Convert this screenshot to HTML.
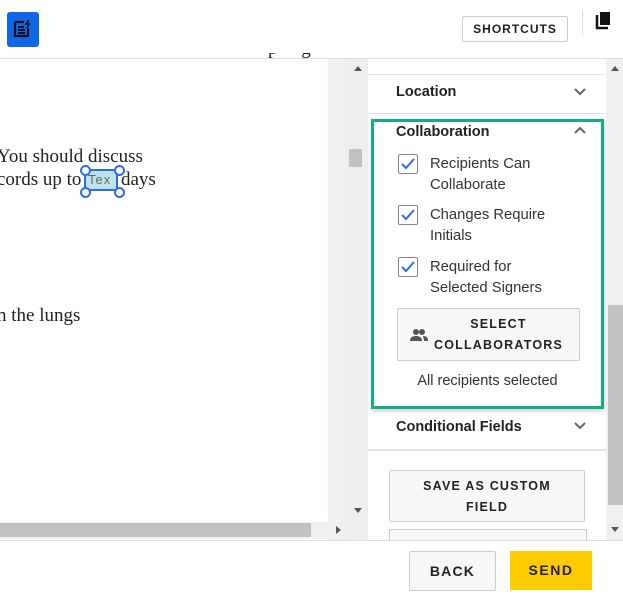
<!DOCTYPE html>
<html><head><style>
body{margin:0;width:623px;height:591px;position:relative;overflow:hidden;background:#fff;font-family:"Liberation Sans",Arial,sans-serif;color:#222}
.a{position:absolute}
.serif{font-family:"Liberation Serif",serif;font-size:19px;color:#222;position:absolute;white-space:nowrap}
.btn{position:absolute;border:1px solid #ccc;border-radius:2px;background:#f7f7f7;font-weight:bold;letter-spacing:1.2px;font-size:12.5px;text-align:center;color:#222}
.cb{position:absolute;left:398px;width:18px;height:18px;border:1px solid #888;border-radius:2px;background:#fff}
.cb svg{position:absolute;left:2px;top:3px}
.lbl{position:absolute;left:430px;font-size:14.8px;line-height:21px;color:#333}
.h{position:absolute;left:396px;font-weight:bold;font-size:14.5px;color:#222}
</style></head><body>
<div class="serif" style="left:268px;top:38px">p &nbsp; &nbsp; g</div>
<!-- header -->
<div class="a" style="left:0;top:0;width:623px;height:53px;background:#fff"></div>
<div class="a" style="left:7px;top:12px;width:32px;height:35px;background:#0e66e9;border-radius:3px"></div>
<svg class="a" style="left:13px;top:19px" width="20" height="20" viewBox="0 0 20 20"><path d="M2 3h9M2 3v14h13V9" stroke="#111" stroke-width="2.2" fill="none"/><path d="M5 8h6M5 11h7M5 14h7" stroke="#111" stroke-width="2"/><path d="M16 1l-3 4h3l-2 4" stroke="#111" stroke-width="1.6" fill="none"/></svg>
<div class="btn" style="left:462px;top:16px;width:104px;height:24px;line-height:24px;font-size:12px;letter-spacing:1px;background:#fff">SHORTCUTS</div>
<div class="a" style="left:582px;top:10px;width:1px;height:25px;background:#ddd"></div>
<svg class="a" style="left:594px;top:10px" width="20" height="20" viewBox="0 0 20 20"><path d="M6 2h10v13H6z" fill="#111"/><path d="M3 5v13h11" stroke="#111" stroke-width="2.5" fill="none"/></svg>
<div class="a" style="left:0;top:58px;width:623px;height:1px;background:#ddd"></div>
<!-- doc -->
<div class="serif" style="left:-3px;top:146px">You should discuss</div>
<div class="serif" style="left:-3px;top:169px">cords up to</div>
<div class="serif" style="left:121px;top:169px">days</div>
<div class="serif" style="left:-3px;top:305px">n the lungs</div>
<div class="a" style="left:84px;top:169px;width:34px;height:22px;background:#bfe3ee;border:2px solid #2e6fe0;box-sizing:border-box"></div>
<div class="a" style="left:88px;top:172px;font-size:13px;color:#666;letter-spacing:1px">Tex</div>
<div class="a" style="left:80px;top:165px;width:7px;height:7px;border:2px solid #2e6fe0;border-radius:50%;background:#fff"></div>
<div class="a" style="left:114px;top:165px;width:7px;height:7px;border:2px solid #2e6fe0;border-radius:50%;background:#fff"></div>
<div class="a" style="left:80px;top:187px;width:7px;height:7px;border:2px solid #2e6fe0;border-radius:50%;background:#fff"></div>
<div class="a" style="left:114px;top:187px;width:7px;height:7px;border:2px solid #2e6fe0;border-radius:50%;background:#fff"></div>
<!-- left scrollbars -->
<div class="a" style="left:328px;top:59px;width:40px;height:481px;background:#f2f0f0"></div>
<div class="a" style="left:345px;top:59px;width:23px;height:481px;background:#efeded"></div>
<div class="a" style="left:354px;top:66px;border:4px solid transparent;border-bottom:5px solid #555;border-top:0"></div>
<div class="a" style="left:354px;top:508px;border:4px solid transparent;border-top:5px solid #555;border-bottom:0"></div>
<div class="a" style="left:349px;top:149px;width:13px;height:18px;background:#c1c1c1"></div>
<div class="a" style="left:0;top:522px;width:345px;height:17px;background:#f0f0f0"></div>
<div class="a" style="left:0;top:523px;width:311px;height:14px;background:#c1c1c1"></div>
<div class="a" style="left:336px;top:526px;border:4px solid transparent;border-left:5px solid #555;border-right:0"></div>
<!-- right panel -->
<div class="a" style="left:368px;top:59px;width:238px;height:481px;background:#fff"></div>
<div class="a" style="left:368px;top:74px;width:238px;height:1px;background:#e2e2e2"></div>
<div class="h" style="top:84px">Location</div>
<svg class="a" style="left:573px;top:87px" width="14" height="10"><path d="M2 2l5 5 5-5" stroke="#666" stroke-width="2" fill="none"/></svg>
<div class="a" style="left:368px;top:113px;width:238px;height:1px;background:#e2e2e2"></div>
<div class="a" style="left:371px;top:119px;width:233px;height:290px;border:3px solid #12ac8c;box-sizing:border-box;box-shadow:0 2px 4px rgba(0,0,0,.2);background:#fff"></div>
<div class="h" style="top:124px">Collaboration</div>
<svg class="a" style="left:573px;top:125px" width="14" height="10"><path d="M2 8l5-5 5 5" stroke="#666" stroke-width="2" fill="none"/></svg>
<div class="cb" style="top:154px"><svg width="14" height="12"><path d="M1 6l4 4 8-9" stroke="#2e6fe0" stroke-width="2" fill="none"/></svg></div>
<div class="lbl" style="top:154px">Recipients Can<br>Collaborate</div>
<div class="cb" style="top:205px"><svg width="14" height="12"><path d="M1 6l4 4 8-9" stroke="#2e6fe0" stroke-width="2" fill="none"/></svg></div>
<div class="lbl" style="top:205px">Changes Require<br>Initials</div>
<div class="cb" style="top:257px"><svg width="14" height="12"><path d="M1 6l4 4 8-9" stroke="#2e6fe0" stroke-width="2" fill="none"/></svg></div>
<div class="lbl" style="top:257px">Required for<br>Selected Signers</div>
<div class="btn" style="left:397px;top:308px;width:183px;height:53px;line-height:21px;padding-top:5px;box-sizing:border-box;padding-left:20px">SELECT<br>COLLABORATORS</div>
<svg class="a" style="left:410px;top:328px" width="18" height="14" viewBox="0 0 18 14"><circle cx="6" cy="4" r="3" fill="#555"/><circle cx="12" cy="4" r="3" fill="#555"/><path d="M0 13c0-4 3-5 6-5s6 1 6 5z" fill="#555"/><path d="M13 8c3 0 5 1 5 5h-4c0-2-1-4-1-5z" fill="#555"/></svg>
<div class="a" style="left:371px;top:373px;width:233px;text-align:center;font-size:14.5px;color:#333">All recipients selected</div>
<div class="h" style="top:419px">Conditional Fields</div>
<svg class="a" style="left:573px;top:421px" width="14" height="10"><path d="M2 2l5 5 5-5" stroke="#666" stroke-width="2" fill="none"/></svg>
<div class="a" style="left:368px;top:449px;width:238px;height:2px;background:#e2e2e2"></div>
<div class="btn" style="left:389px;top:470px;width:196px;height:52px;line-height:21px;padding-top:5px;box-sizing:border-box;background:#f8f8f8">SAVE AS CUSTOM<br>FIELD</div>
<div class="btn" style="left:389px;top:529px;width:196px;height:20px;background:#f8f8f8"></div>
<!-- right scrollbar -->
<div class="a" style="left:606px;top:59px;width:17px;height:481px;background:#f0f0f0"></div>
<div class="a" style="left:608px;top:305px;width:15px;height:200px;background:#c1c1c1"></div>
<div class="a" style="left:611px;top:66px;border:4px solid transparent;border-bottom:5px solid #555;border-top:0"></div>
<div class="a" style="left:611px;top:527px;border:4px solid transparent;border-top:5px solid #555;border-bottom:0"></div>
<!-- footer -->
<div class="a" style="left:0;top:540px;width:623px;height:51px;background:#fff;border-top:1px solid #ddd"></div>
<div class="btn" style="left:409px;top:551px;width:85px;height:38px;line-height:38px;font-size:14px">BACK</div>
<div class="a" style="left:510px;top:551px;width:82px;height:39px;line-height:39px;background:#ffcc00;font-weight:bold;letter-spacing:1.5px;font-size:14px;text-align:center;color:#222">SEND</div>
</body></html>
